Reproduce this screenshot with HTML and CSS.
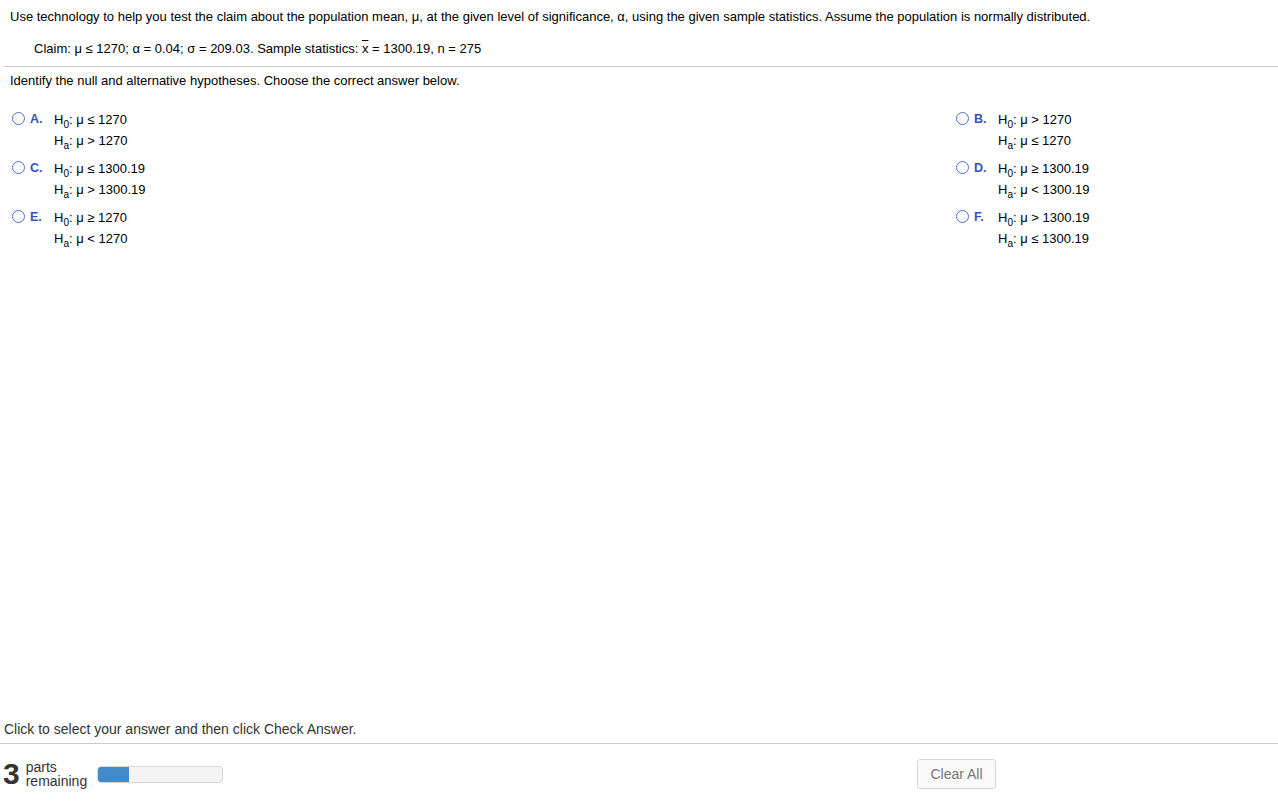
FILE: index.html
```html
<!DOCTYPE html>
<html lang="en">
<head>
    <meta charset="UTF-8">
    <title>Hypothesis Test</title>
    <link rel="stylesheet" href="styles.css">
</head>
<body>
    <div class="question">
        <p class="intro">Use technology to help you test the claim about the population mean, <span class="m">μ</span>, at the given level of significance, <span class="m">α</span>, using the given sample statistics. Assume the population is normally distributed.</p>
        <p class="claim">Claim: <span class="m">μ ≤ 1270; α = 0.04; σ = 209.03</span>. Sample statistics: <span class="m"><span class="xbar">x</span> = 1300.19, n = 275</span></p>
    </div>
    <div class="part">
        <p class="prompt">Identify the null and alternative hypotheses. Choose the correct answer below.</p>
        <div class="choices">
            <div class="choice">
                <span class="radio"></span><span class="letter">A.</span>
                <div class="hyp">
                    <div>H<sub>0</sub>: μ ≤ 1270</div>
                    <div>H<sub>a</sub>: μ &gt; 1270</div>
                </div>
            </div>
            <div class="choice">
                <span class="radio"></span><span class="letter">B.</span>
                <div class="hyp">
                    <div>H<sub>0</sub>: μ &gt; 1270</div>
                    <div>H<sub>a</sub>: μ ≤ 1270</div>
                </div>
            </div>
            <div class="choice">
                <span class="radio"></span><span class="letter">C.</span>
                <div class="hyp">
                    <div>H<sub>0</sub>: μ ≤ 1300.19</div>
                    <div>H<sub>a</sub>: μ &gt; 1300.19</div>
                </div>
            </div>
            <div class="choice">
                <span class="radio"></span><span class="letter">D.</span>
                <div class="hyp">
                    <div>H<sub>0</sub>: μ ≥ 1300.19</div>
                    <div>H<sub>a</sub>: μ &lt; 1300.19</div>
                </div>
            </div>
            <div class="choice">
                <span class="radio"></span><span class="letter">E.</span>
                <div class="hyp">
                    <div>H<sub>0</sub>: μ ≥ 1270</div>
                    <div>H<sub>a</sub>: μ &lt; 1270</div>
                </div>
            </div>
            <div class="choice">
                <span class="radio"></span><span class="letter">F.</span>
                <div class="hyp">
                    <div>H<sub>0</sub>: μ &gt; 1300.19</div>
                    <div>H<sub>a</sub>: μ ≤ 1300.19</div>
                </div>
            </div>
        </div>
    </div>
    <div class="footer">
        <p class="hint">Click to select your answer and then click Check Answer.</p>
        <div class="status">
            <div class="parts">
                <span class="count">3</span>
                <span class="label">parts<br>remaining</span>
                <div class="progress"><div class="progress-fill" style="width: 25%"></div></div>
            </div>
            <button class="clear-btn">Clear All</button>
        </div>
    </div>
</body>
</html>
```

FILE: styles.css
```css
body {
    margin: 0;
    font-family: "Liberation Sans", Arial, sans-serif;
    font-size: 13px;
    color: #000;
    background: #fff;
    height: 802px;
    display: flex;
    flex-direction: column;
}

p {
    margin: 0;
}

.question {
    margin-left: 4px;
    padding: 10px 0 10px 6px;
    border-bottom: 1px solid #c9cbd3;
}

.intro {
    line-height: 14px;
}

.claim {
    margin-top: 18px;
    padding-left: 24px;
    line-height: 14px;
}

.xbar {
    text-decoration: overline;
}

.part {
    padding: 7px 0 0 10px;
    flex: 1;
}

.prompt {
    line-height: 14px;
}

.choices {
    display: grid;
    grid-template-columns: 944px 1fr;
    row-gap: 10px;
    margin-top: 24px;
    padding-left: 2px;
}

.choice {
    display: flex;
    align-items: flex-start;
}

.radio {
    width: 11px;
    height: 11px;
    border: 1.5px solid #4d6fd2;
    border-radius: 50%;
    margin-top: 0;
    flex: none;
}

.letter {
    color: #3b4fc4;
    font-weight: bold;
    font-size: 12.5px;
    margin-left: 5px;
    width: 24px;
    line-height: 14px;
}

.hyp div {
    line-height: 21px;
    height: 21px;
    margin-top: -3px;
}

.hyp div + div {
    margin-top: 0;
}

.hyp sub {
    font-size: 10px;
    vertical-align: -4px;
    line-height: 0;
}

.footer {
    padding-bottom: 13px;
}

.hint {
    font-size: 14px;
    color: #333;
    padding-left: 4px;
    line-height: 16px;
    padding-bottom: 6px;
    border-bottom: 1px solid #c9cbd3;
}

.status {
    display: flex;
    justify-content: space-between;
    align-items: center;
    padding: 15px 282px 0 3px;
}

.parts {
    display: flex;
    align-items: center;
}

.count {
    font-size: 30px;
    font-weight: bold;
    color: #333;
    line-height: 28px;
}

.label {
    font-size: 14px;
    color: #333;
    line-height: 14px;
    margin-left: 6px;
}

.progress {
    width: 124px;
    height: 15px;
    margin-left: 10px;
    background: #f4f4f4;
    border: 1px solid #d6d6d6;
    border-radius: 4px;
    overflow: hidden;
}

.progress-fill {
    height: 100%;
    background: #428bca;
}

.clear-btn {
    font-family: "Liberation Sans", Arial, sans-serif;
    font-size: 14px;
    color: #777;
    background: #fafafa;
    border: 1px solid #d8d8d8;
    border-radius: 3px;
    padding: 6px 12px;
    width: 79px;
    height: 30px;
}
```
